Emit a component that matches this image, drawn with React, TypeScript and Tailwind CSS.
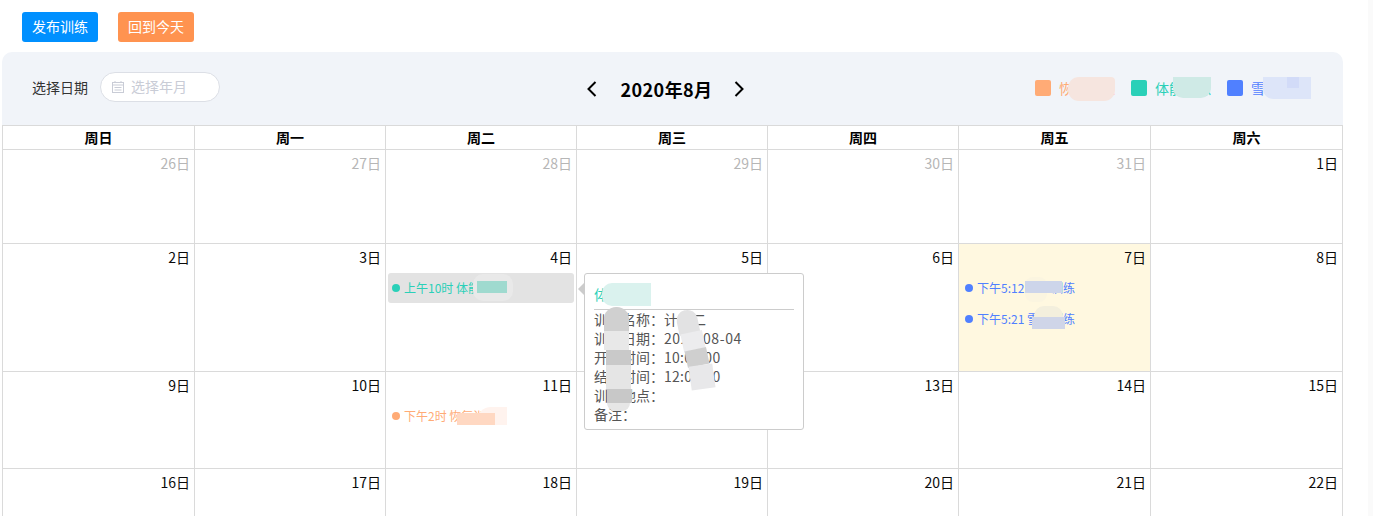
import React from "react";

const HEAD = ["周日", "周一", "周二", "周三", "周四", "周五", "周六"];

type Ev = { color: string; dot: string; text: string; bg?: boolean };

function Event({ dot, color, text, bg }: Ev) {
  return (
    <div className={`flex items-center h-[30px] rounded-[3px] pl-[4px] text-[12px] leading-[30px] whitespace-nowrap ${color} ${bg ? "bg-[#e3e3e3]" : ""}`}>
      <span className={`w-[8px] h-[8px] rounded-full mr-[4px] shrink-0 ${dot}`} />
      {text}
    </div>
  );
}

function Cell({ day, muted, today, children }: { day: string; muted?: boolean; today?: boolean; children?: React.ReactNode }) {
  return (
    <div className={`min-w-0 border-r border-[#dadada] ${today ? "bg-[#fff8e0]" : ""}`}>
      <div className={`text-right pr-[4px] pt-[2px] text-[14px] leading-[22px] ${muted ? "text-[#b6b6b6]" : "text-[#0a0a0a]"}`}>{day}</div>
      {children}
    </div>
  );
}

function Blur({ className }: { className: string }) {
  return <div className={`absolute ${className}`} />;
}

const cols = "grid grid-cols-[192px_191px_191px_191px_191px_192px_192px] border-b border-[#dadada]";

export default function App() {
  return (
    <div className="relative h-[516px] overflow-hidden bg-white text-[14px] font-['Noto_Sans_CJK_SC','Microsoft_YaHei',sans-serif]">
      <div className="flex gap-[20px] pl-[22px] pt-[12px]">
        <button className="w-[76px] h-[30px] rounded-[3px] bg-[#0090ff] text-white text-[14px] pb-[2px]">发布训练</button>
        <button className="w-[76px] h-[30px] rounded-[3px] bg-[#ff9350] text-white text-[14px] pb-[2px]">回到今天</button>
      </div>

      <div className="mt-[10px] ml-[2px] w-[1341px]">
        <div className="h-[73px] rounded-t-[10px] bg-[#f1f4f9] flex items-center pl-[30px] pr-[32px] relative">
          <div className="flex items-center w-[274px] -mt-[3px]">
            <span className="text-[14px] text-[#333333] mr-[12px]">选择日期</span>
            <div className="w-[120px] h-[30px] rounded-full bg-white border border-[#dcdfe6] flex items-center pl-[10px] pb-[1px] text-[#c9ccd6] text-[14px]">
              <svg width="14" height="14" viewBox="0 0 14 14" fill="none" stroke="#c9ccd6" strokeWidth="1" className="mr-[6px]">
                <rect x="1.5" y="2.5" width="11" height="10" />
                <path d="M1.5 5h11M3.5 7.5h7M3.5 10h7M4 1v2M10 1v2" />
              </svg>
              选择年月
            </div>
          </div>
          <div className="flex-1 flex items-center justify-center gap-[22px] -ml-[8px] pt-[1px]">
            <svg width="12" height="16" viewBox="0 0 12 16" fill="none" stroke="#000" strokeWidth="2"><path d="M8.5 1 1.5 8l7 7" /></svg>
            <span className="text-[18px] font-bold text-black leading-none tracking-[0.4px]">2020年8月</span>
            <svg width="12" height="16" viewBox="0 0 12 16" fill="none" stroke="#000" strokeWidth="2"><path d="M1.5 1l7 7-7 7" /></svg>
          </div>
          <div className="flex items-center gap-[16px] text-[14px] w-[276px] whitespace-nowrap -mt-[1px]">
            <div className="flex items-center gap-[8px] text-[#ffab76] w-[80px]"><span className="w-[16px] h-[16px] rounded-[2px] bg-[#ffab76]" />恢复训练</div>
            <div className="flex items-center gap-[8px] text-[#2ad0b8] w-[80px]"><span className="w-[16px] h-[16px] rounded-[2px] bg-[#2ad0b8]" />体能训练</div>
            <div className="flex items-center gap-[8px] text-[#5080ff] w-[84px]"><span className="w-[16px] h-[16px] rounded-[2px] bg-[#5080ff]" />雪上训练</div>
          </div>
        </div>

        <div className="border-l border-t border-[#dadada] bg-white">
          <div className={`${cols} h-[24px]`}>
            {HEAD.map((h) => (
              <div key={h} className="text-center text-[14px] font-bold leading-[22px] text-black border-r border-[#dadada]">{h}</div>
            ))}
          </div>
          <div className={`${cols} h-[94px]`}>
            {["26日", "27日", "28日", "29日", "30日", "31日"].map((d) => <Cell key={d} day={d} muted />)}
            <Cell day="1日" />
          </div>
          <div className={`${cols} h-[128px]`}>
            <Cell day="2日" />
            <Cell day="3日" />
            <Cell day="4日">
              <div className="mt-[5px] ml-[2px] mr-[2px]"><Event dot="bg-[#2ad0b8]" color="text-[#2ad0b8]" text="上午10时 体能训练" bg /></div>
            </Cell>
            <Cell day="5日" />
            <Cell day="6日" />
            <Cell day="7日" today>
              <div className="mt-[5px] ml-[2px]">
                <Event dot="bg-[#5080ff]" color="text-[#5080ff]" text="下午5:12 雪上训练" />
                <div className="h-[1px]" />
                <Event dot="bg-[#5080ff]" color="text-[#5080ff]" text="下午5:21 雪上训练" />
              </div>
            </Cell>
            <Cell day="8日" />
          </div>
          <div className={`${cols} h-[97px]`}>
            <Cell day="9日" />
            <Cell day="10日" />
            <Cell day="11日">
              <div className="mt-[5px] ml-[2px]"><Event dot="bg-[#ffab76]" color="text-[#ffab76]" text="下午2时 恢复训练" /></div>
            </Cell>
            <Cell day="12日" />
            <Cell day="13日" />
            <Cell day="14日" />
            <Cell day="15日" />
          </div>
          <div className={`${cols} h-[60px]`}>
            <Cell day="16日" />
            <Cell day="17日" />
            <Cell day="18日" />
            <Cell day="19日" />
            <Cell day="20日" />
            <Cell day="21日" />
            <Cell day="22日" />
          </div>
        </div>
      </div>

      {/* page scrollbar track */}
      <div className="absolute right-0 top-0 w-[5px] h-full bg-[#fafafa]" />

      {/* popover */}
      <div className="absolute left-[584px] top-[273px] w-[220px] h-[157px] bg-white border border-[#cccccc] rounded-[3px] px-[9px] pt-[9px] text-[14px] leading-[19px] text-[#555555]">
        <div className="absolute -left-[7px] top-[8px] w-0 h-0 border-y-[7px] border-y-transparent border-r-[7px] border-r-[#cccccc]" />
        <div className="text-[#2ad0b8] text-[14px] leading-[22px] h-[27px] border-b border-[#cccccc]">体能训练</div>
        <div>训练名称：计划二</div>
        <div>训练日期：<span className="tracking-[0.6px]">2020-08-04</span></div>
        <div>开始时间：<span className="tracking-[0.25px]">10:00:00</span></div>
        <div>结束时间：<span className="tracking-[0.25px]">12:00:00</span></div>
        <div>训练地点：</div>
        <div>备注：</div>
      </div>

      {/* hand-drawn redaction scribbles over the screenshot */}
      <Blur className="left-[1068px] top-[77px] w-[47px] h-[24px] rounded-[11px] rounded-tr-[4px] bg-[#f6e5df]" />
      <Blur className="left-[1173px] top-[77px] w-[38px] h-[21px] rounded-b-[10px] bg-[#cfeae6]" />
      <Blur className="left-[1263px] top-[77px] w-[48px] h-[22px] rounded-bl-[10px] bg-[#dde5f9]" />
      <Blur className="left-[1287px] top-[77px] w-[12px] h-[11px] bg-[#d2dbf8]" />

      <Blur className="left-[473px] top-[274px] w-[40px] h-[27px] rounded-[10px] bg-[#e9e9e9]" />
      <Blur className="left-[477px] top-[281px] w-[30px] h-[12px] bg-[#9fdacf]" />

      <Blur className="left-[1025px] top-[277px] w-[22px] h-[25px] rounded-[8px] bg-[#fbf5e0]" />
      <Blur className="left-[1025px] top-[281px] w-[37px] h-[12px] bg-[#cdd5ea]" />
      <Blur className="left-[1034px] top-[306px] w-[29px] h-[14px] rounded-t-[10px] bg-[#f3efdd]" />
      <Blur className="left-[1032px] top-[317px] w-[33px] h-[12px] bg-[#cfd5e8]" />

      <Blur className="left-[477px] top-[407px] w-[30px] h-[18px] rounded-tl-[14px] bg-[#fff3ee]" />
      <Blur className="left-[457px] top-[413px] w-[38px] h-[12px] bg-[#ffd8c2]" />

      <Blur className="left-[602px] top-[283px] w-[49px] h-[23px] rounded-l-[10px] bg-[#daf2ee]" />

      <Blur className="left-[604px] top-[307px] w-[25px] h-[24px] rounded-t-[12px] bg-[#d0d0d0]" />
      <Blur className="left-[604px] top-[331px] w-[25px] h-[19px] bg-[#e8e8e8]" />
      <Blur className="left-[606px] top-[350px] w-[25px] h-[15px] bg-[#c9c9c9]" />
      <Blur className="left-[606px] top-[365px] w-[25px] h-[24px] bg-[#e5e5e5]" />
      <Blur className="left-[607px] top-[389px] w-[25px] h-[14px] bg-[#c8c8c8]" />
      <Blur className="left-[607px] top-[403px] w-[23px] h-[8px] rounded-b-[10px] bg-[#e6e6e6]" />

      <Blur className="left-[677px] top-[310px] w-[21px] h-[24px] -rotate-[12deg] rounded-t-[10px] bg-[#e2e2e3]" />
      <Blur className="left-[682px] top-[332px] w-[22px] h-[18px] -rotate-[12deg] bg-[#ececee]" />
      <Blur className="left-[686px] top-[349px] w-[22px] h-[17px] -rotate-[12deg] bg-[#cfcfcf]" />
      <Blur className="left-[690px] top-[365px] w-[24px] h-[24px] -rotate-[8deg] bg-[#e8e8ea]" />
    </div>
  );
}
